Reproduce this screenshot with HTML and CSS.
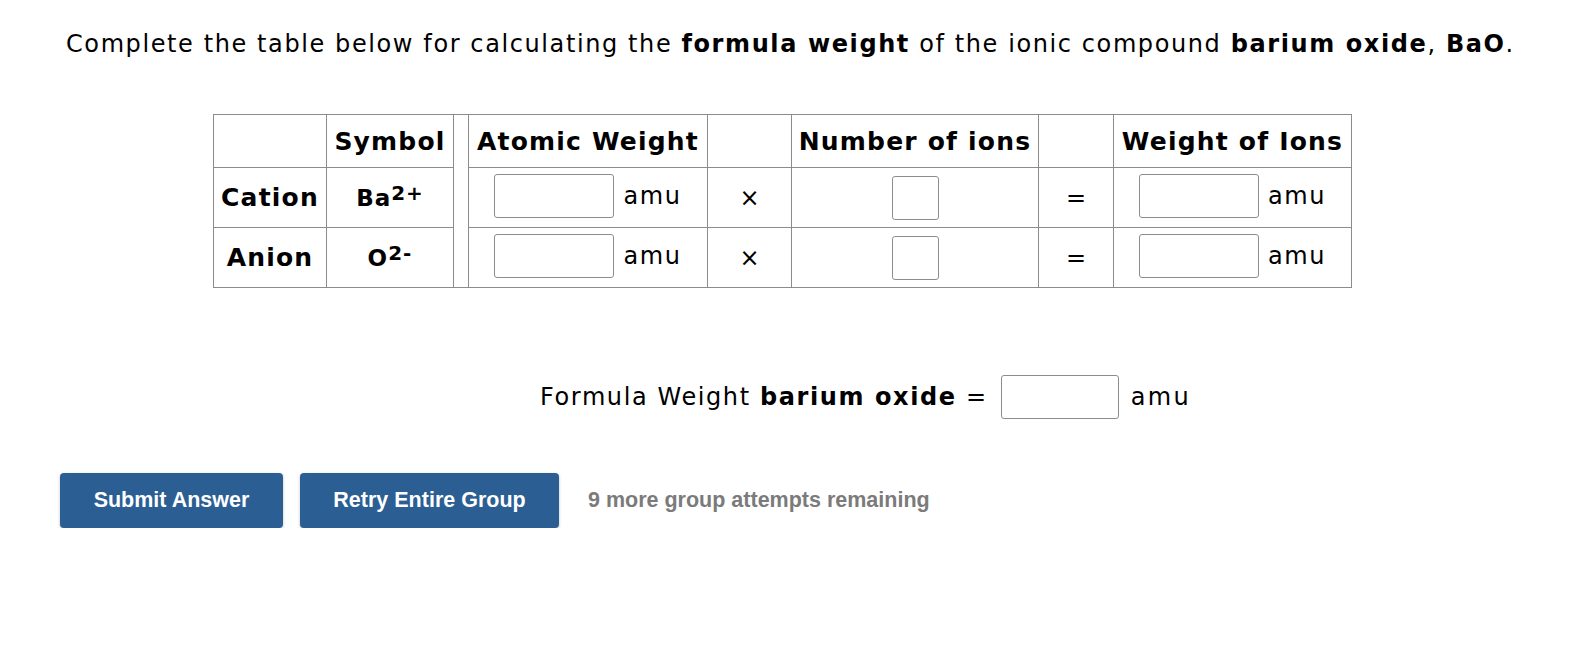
FILE: index.html
```html
<!DOCTYPE html>
<html>
<head>
<meta charset="utf-8">
<link rel="stylesheet" href="styles.css">
</head>
<body>
<div class="page">
  <p class="intro">Complete the table below for calculating the <b>formula weight</b> of the ionic compound <b>barium oxide</b>, <b>BaO</b>.</p>

  <table class="calc">
    <colgroup>
      <col class="c-label"><col class="c-sym"><col class="c-gap"><col class="c-aw"><col class="c-op1"><col class="c-num"><col class="c-op2"><col class="c-wt">
    </colgroup>
    <tr class="head">
      <th></th>
      <th>Symbol</th>
      <td class="gap" rowspan="3"></td>
      <th>Atomic Weight</th>
      <th></th>
      <th>Number of ions</th>
      <th></th>
      <th>Weight of Ions</th>
    </tr>
    <tr class="row">
      <th>Cation</th>
      <td class="sym">Ba<sup>2+</sup></td>
      <td><span class="field"><span class="box wide"></span><span class="unit">amu</span></span></td>
      <td class="op">×</td>
      <td><span class="box narrow"></span></td>
      <td class="op">=</td>
      <td><span class="field"><span class="box wide"></span><span class="unit">amu</span></span></td>
    </tr>
    <tr class="row">
      <th>Anion</th>
      <td class="sym">O<sup>2-</sup></td>
      <td><span class="field"><span class="box wide"></span><span class="unit">amu</span></span></td>
      <td class="op">×</td>
      <td><span class="box narrow"></span></td>
      <td class="op">=</td>
      <td><span class="field"><span class="box wide"></span><span class="unit">amu</span></span></td>
    </tr>
  </table>

  <div class="total">
    <span class="total-label">Formula Weight <b>barium oxide</b> =</span>
    <span class="box total-box"></span>
    <span class="unit">amu</span>
  </div>

  <div class="actions">
    <button class="btn btn-submit">Submit Answer</button>
    <button class="btn btn-retry">Retry Entire Group</button>
    <span class="attempts">9 more group attempts remaining</span>
  </div>
</div>
</body>
</html>
```

FILE: styles.css
```css
html, body {
  margin: 0;
  padding: 0;
  background: #ffffff;
}

.page {
  font-family: "DejaVu Sans", Verdana, sans-serif;
  color: #000;
  padding: 30px 0 0 66px;
}

.intro {
  margin: 0;
  font-size: 24px;
  line-height: 28px;
  letter-spacing: 1.6px;
}

.calc {
  margin: 56px 0 0 147px;
  border-collapse: collapse;
  table-layout: fixed;
  width: 1138px;
}

.c-label { width: 113px; }
.c-sym { width: 127px; }
.c-gap { width: 15px; }
.c-aw { width: 239px; }
.c-op1 { width: 84px; }
.c-num { width: 247px; }
.c-op2 { width: 75px; }
.c-wt { width: 238px; }

.calc th,
.calc td {
  border: 1px solid #8c8c8c;
  padding: 0;
  text-align: center;
  vertical-align: middle;
  white-space: nowrap;
}

.calc th {
  font-weight: bold;
  font-size: 25px;
  letter-spacing: 1.2px;
}

.head th { height: 52px; }
.row th, .row td { height: 59px; }

.sym {
  font-weight: bold;
  font-size: 23px;
  letter-spacing: 1px;
}

.sym sup {
  font-size: 20px;
  vertical-align: 6px;
  line-height: 0;
}

.op {
  font-size: 24px;
}

.field {
  display: inline-flex;
  align-items: center;
  gap: 9px;
}

.box {
  display: inline-block;
  height: 42px;
  border: 1px solid #8d8d8d;
  border-radius: 3px;
  background: #fff;
  vertical-align: middle;
}

.box.wide { width: 118px; }
.box.narrow { width: 45px; }

.unit {
  font-size: 24px;
  letter-spacing: 1.6px;
}

.total {
  display: flex;
  align-items: center;
  margin: 87px 0 0 474px;
  font-size: 24px;
  letter-spacing: 1.6px;
}

.total-label {
  margin-right: 13px;
}

.total-box {
  width: 116px;
  margin-right: 12px;
}

.total .unit {
  letter-spacing: 2.4px;
}

.actions {
  display: flex;
  align-items: center;
  margin: 54px 0 0 -6px;
}

.btn {
  font-family: "Liberation Sans", Arial, sans-serif;
  font-weight: bold;
  font-size: 21.5px;
  color: #fff;
  background: #2b5e92;
  border: none;
  border-radius: 4px;
  height: 55px;
  box-shadow: 0 1px 3px rgba(0, 0, 0, 0.25);
  padding: 0;
}

.btn-submit {
  width: 223px;
  margin-right: 17px;
}

.btn-retry {
  width: 259px;
  margin-right: 29px;
}

.attempts {
  font-family: "Liberation Sans", Arial, sans-serif;
  font-weight: bold;
  font-size: 21.5px;
  color: #7b7b7b;
}
```
